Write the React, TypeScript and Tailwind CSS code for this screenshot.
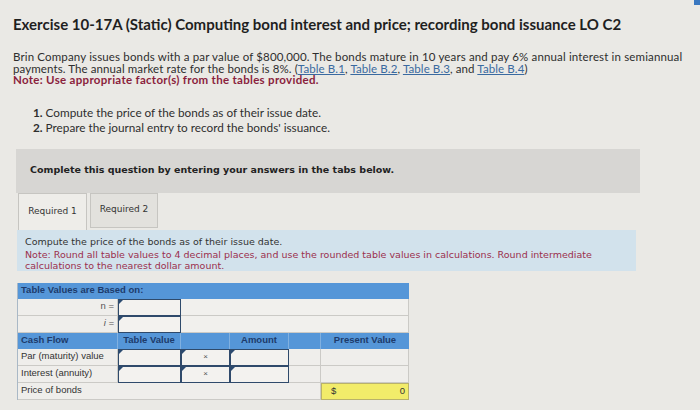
import React from 'react';

function Marker() {
  return (
    <svg className="absolute left-0 top-0" width="4" height="4" viewBox="0 0 4 4">
      <polygon points="0,0 4,0 0,4" fill="#2a4a70" />
    </svg>
  );
}

function Input({ children }: { children?: React.ReactNode }) {
  return (
    <div className="relative h-full border border-[#2f4a6b] bg-[#f3f2ef] flex items-center justify-center text-[8px] text-[#555]">
      <Marker />
      {children}
    </div>
  );
}

const cell = 'h-full border-r border-b border-[#cbcac6] bg-[#efeeeb]';
const head = 'h-full flex items-center justify-center border-r border-[#80b0e0] text-[#1d3b6b] font-bold';

export default function App() {
  return (
    <div className="relative w-[700px] h-[410px] overflow-hidden bg-[#eae9e5] text-[#2b2b2b] font-['Lato',sans-serif]">
      <div className="absolute top-0 right-0 w-[6px] h-[5px] bg-[#3a78c0]" />

      {/* Header text */}
      <div className="pl-[13px] pr-[8px]">
        <h1 className="pt-[15px] text-[15px] leading-[18px] font-bold text-[#1f1f1f] whitespace-nowrap">
          Exercise 10-17A (Static) Computing bond interest and price; recording bond issuance LO C2
        </h1>
        <div className="mt-[18px] text-[11.5px] leading-[11.5px] text-[#2e2e2e]">
          <p className="whitespace-nowrap tracking-[0.15px]">
            Brin Company issues bonds with a par value of $800,000. The bonds mature in 10 years and pay 6% annual interest in semiannual
          </p>
          <p className="whitespace-nowrap tracking-[0.1px]">
            payments. The annual market rate for the bonds is 8%. (
            <span className="underline text-[#3a6aa0]">Table B.1</span>,{' '}
            <span className="underline text-[#3a6aa0]">Table B.2</span>,{' '}
            <span className="underline text-[#3a6aa0]">Table B.3</span>, and{' '}
            <span className="underline text-[#3a6aa0]">Table B.4</span>)
          </p>
          <p className="font-bold text-[#8a1f3d] tracking-[0.3px]">Note: Use appropriate factor(s) from the tables provided.</p>
        </div>
        <ol className="mt-[19px] pl-[20px] text-[11.75px] leading-[15px] text-[#2e2e2e]">
          <li>
            <span className="font-bold">1.</span> Compute the price of the bonds as of their issue date.
          </li>
          <li>
            <span className="font-bold">2.</span> Prepare the journal entry to record the bonds' issuance.
          </li>
        </ol>
      </div>

      {/* Instruction bar */}
      <div className="ml-[16px] mt-[14px] w-[624px] h-[44px] bg-[#d7d6d3] flex items-center pl-[14px]">
        <p className="font-['DejaVu_Sans',sans-serif] font-bold text-[9.5px] text-[#222]">
          Complete this question by entering your answers in the tabs below.
        </p>
      </div>

      {/* Tabs */}
      <div className="ml-[18px] flex items-start gap-[3px] h-[37px] font-['DejaVu_Sans',sans-serif] text-[9px] text-[#333]">
        <div className="w-[69px] h-[37px] bg-[#eeede9] border border-b-0 border-[#c6c5c1] flex items-center justify-center">
          Required 1
        </div>
        <div className="w-[68px] h-[35px] bg-[#e2e1dd] border border-[#c6c5c1] flex items-center justify-center">
          Required 2
        </div>
      </div>

      {/* Blue panel */}
      <div className="ml-[17px] w-[619px] h-[41px] bg-[#d2e2ec] pl-[8px] pt-[6px] font-['DejaVu_Sans',sans-serif] text-[9.5px] leading-[11px]">
        <p className="text-[#333]">Compute the price of the bonds as of their issue date.</p>
        <p className="mt-[2px] text-[#9b2f4c] whitespace-nowrap">
          Note: Round all table values to 4 decimal places, and use the rounded table values in calculations. Round intermediate
          <br />
          calculations to the nearest dollar amount.
        </p>
      </div>

      {/* Table */}
      <div className="ml-[17px] mt-[12px] w-[391px] border-l border-r border-[#a9b8c6] font-['Liberation_Sans',sans-serif] text-[9.5px]">
        <div className="grid grid-cols-[100px_63px_49px_59px_32px_88px] grid-rows-[16px_17px_17px_16px_17px_17px_17px]">
          <div className="col-span-6 bg-[#5596d8] flex items-center pl-[3px] text-[#1d3b6b] font-bold">
            Table Values are Based on:
          </div>

          <div className={`${cell} flex items-center justify-end pr-[3px] text-[#555]`}>n =</div>
          <Input />
          <div className={`${cell} col-span-4 bg-[#f1f0ed]`} />

          <div className={`${cell} flex items-center justify-end pr-[3px] text-[#555] italic`}>i =</div>
          <Input />
          <div className={`${cell} col-span-4 bg-[#f1f0ed]`} />

          <div className={`${head} justify-start pl-[3px] bg-[#5596d8]`}>Cash Flow</div>
          <div className={`${head} bg-[#5596d8]`}>Table Value</div>
          <div className={`${head} bg-[#5596d8]`} />
          <div className={`${head} bg-[#5596d8]`}>Amount</div>
          <div className={`${head} bg-[#5596d8]`} />
          <div className={`${head} bg-[#5596d8] border-r-0`}>Present Value</div>

          <div className={`${cell} flex items-center pl-[3px] text-[#333]`}>Par (maturity) value</div>
          <Input />
          <Input>×</Input>
          <Input />
          <div className={cell} />
          <div className={cell} />

          <div className={`${cell} flex items-center pl-[3px] text-[#333]`}>Interest (annuity)</div>
          <Input />
          <Input>×</Input>
          <Input />
          <div className={cell} />
          <div className={cell} />

          <div className={`${cell} col-span-5 flex items-center pl-[3px] text-[#333]`}>Price of bonds</div>
          <div className="h-full bg-[#f2ec6a] border border-[#b9b26a] flex items-center justify-between px-[3px] text-[#333]">
            <span className="pl-[6px]">$</span>
            <span>0</span>
          </div>
        </div>
      </div>
    </div>
  );
}
